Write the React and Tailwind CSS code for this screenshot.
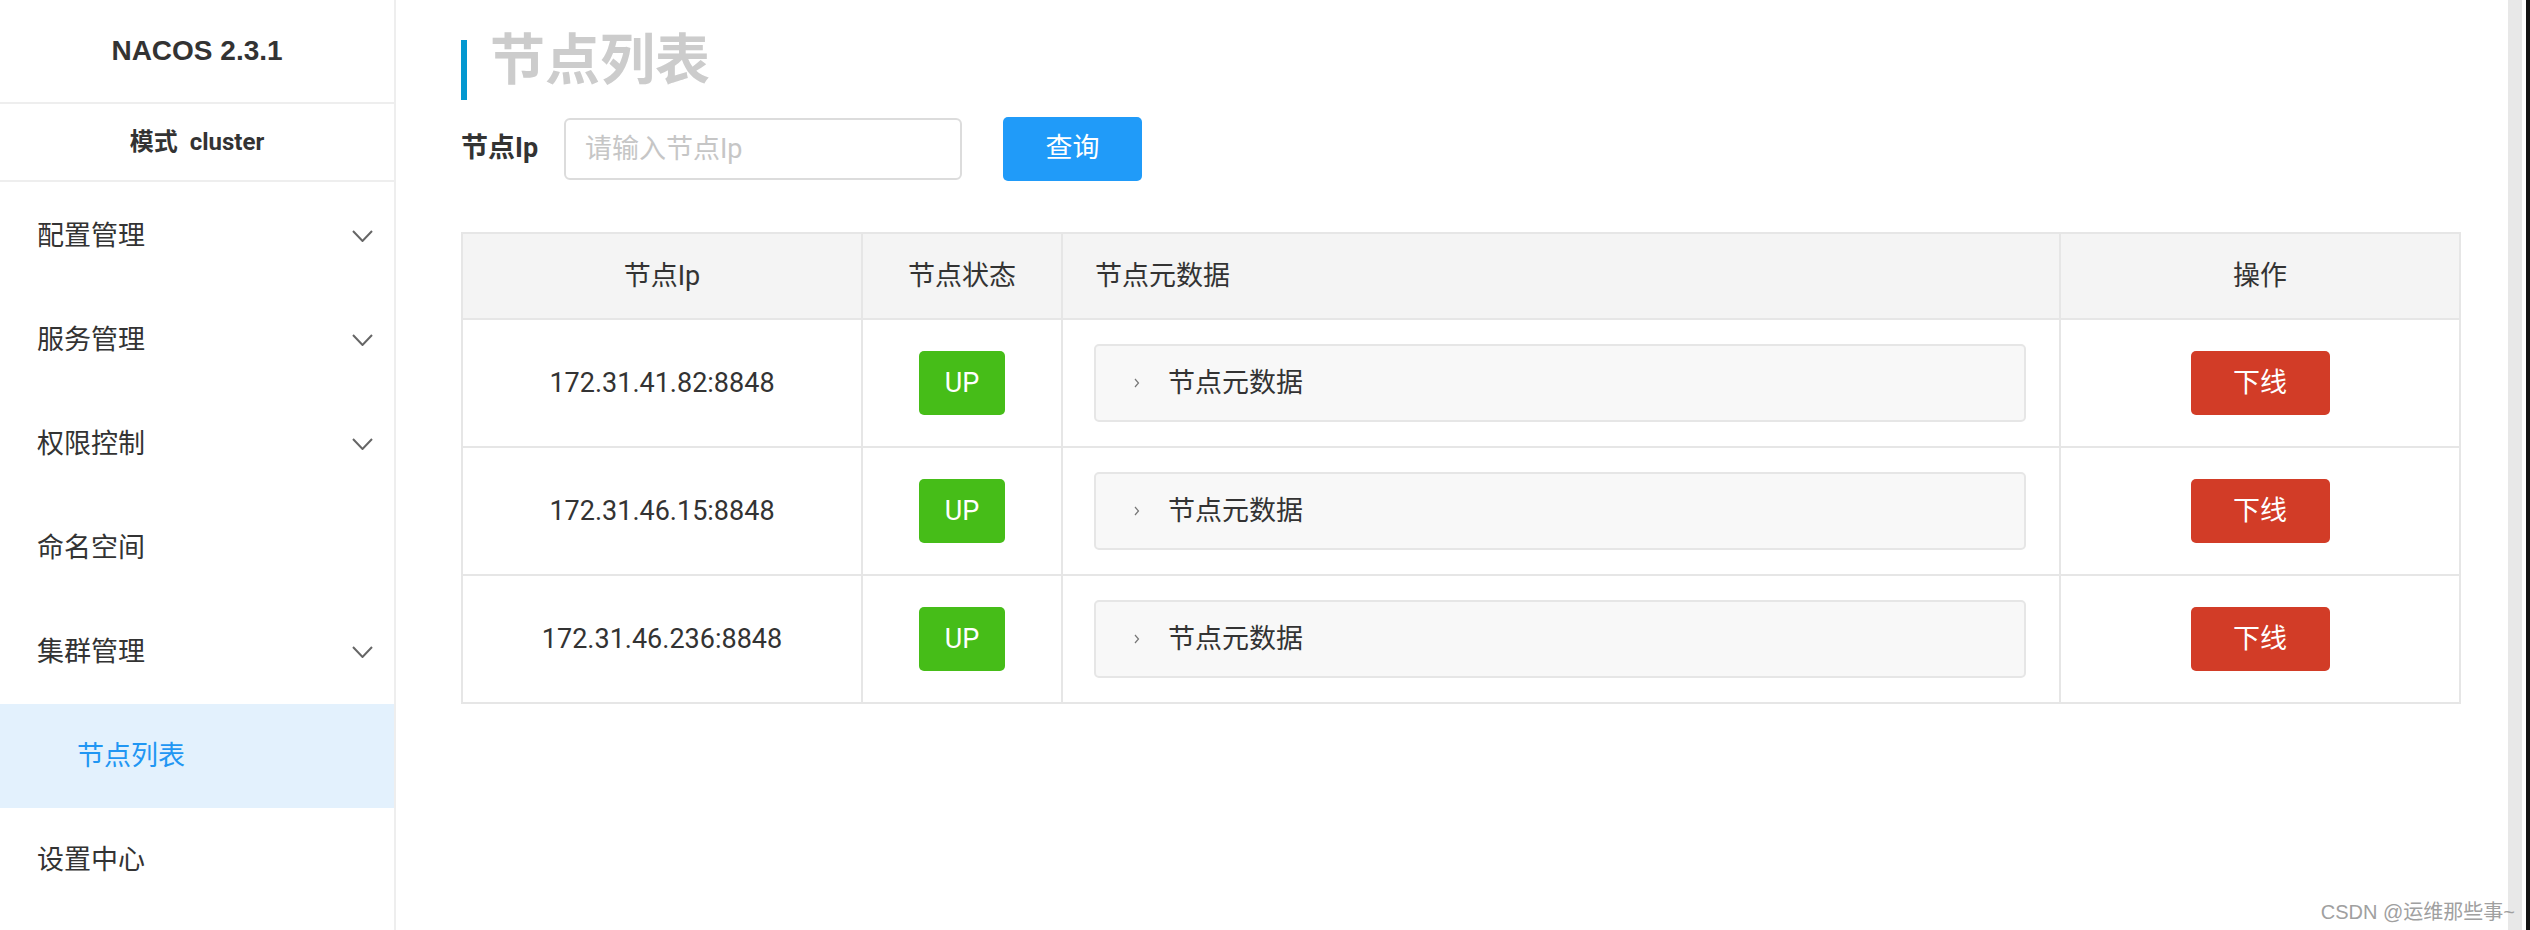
import React from 'react';

const menu = [
    { label: '配置管理', arrow: true },
    { label: '服务管理', arrow: true },
    { label: '权限控制', arrow: true },
    { label: '命名空间', arrow: false },
    { label: '集群管理', arrow: true },
    { label: '节点列表', arrow: false, active: true },
    { label: '设置中心', arrow: false },
];

const nodes = ['172.31.41.82:8848', '172.31.46.15:8848', '172.31.46.236:8848'];

function ChevronDown() {
    return (
        <svg width="21" height="12" viewBox="0 0 21 12" fill="none">
            <path d="M1 1 L10.5 11 L20 1" stroke="#666666" strokeWidth="2" />
        </svg>
    );
}

function Sidebar() {
    return (
        <aside className="w-[396px] shrink-0 h-[930px] border-r-2 border-[#eeeeee] flex flex-col">
            <div className="h-[102px] flex items-center justify-center text-[28px] font-bold text-[#333333] font-['Liberation_Sans',sans-serif]">
                NACOS 2.3.1
            </div>
            <div className="h-[80px] border-y-2 border-[#eeeeee] flex items-center justify-center text-[24px] font-bold text-[#333333]">
                模式&nbsp;&nbsp;cluster
            </div>
            <nav className="pt-[2px]">
                {menu.map((item) => (
                    <div
                        key={item.label}
                        className={`h-[104px] flex items-center justify-between pr-[21px] text-[27px] ${item.active ? 'bg-[#e3f1fd] text-[#2196f3] pl-[77px]' : 'text-[#333333] pl-[37px]'}`}
                    >
                        <span>{item.label}</span>
                        {item.arrow && <ChevronDown />}
                    </div>
                ))}
            </nav>
        </aside>
    );
}

function NodeRow({ ip }) {
    return (
        <tr className="h-[128px]">
            <td className="border-2 border-[#e6e6e6] text-center text-[27px] text-[#333333]">{ip}</td>
            <td className="border-2 border-[#e6e6e6]">
                <div className="mx-auto w-[86px] h-[64px] rounded-[5px] bg-[#46bd18] text-white text-[27px] flex items-center justify-center">
                    UP
                </div>
            </td>
            <td className="border-2 border-[#e6e6e6] pl-[31px] pr-[33px]">
                <div className="h-[78px] rounded-[5px] border-2 border-[#e6e6e6] bg-[#f8f8f8] flex items-center pl-[38px]">
                    <svg width="6" height="10" viewBox="0 0 6 10" fill="none">
                        <path d="M1 1 L4.5 5 L1 9" stroke="#777777" strokeWidth="1.2" />
                    </svg>
                    <span className="ml-[28px] text-[27px] text-[#333333]">节点元数据</span>
                </div>
            </td>
            <td className="border-2 border-[#e6e6e6]">
                <button className="mx-auto w-[139px] h-[64px] rounded-[5px] bg-[#d23c27] text-white text-[27px] flex items-center justify-center">
                    下线
                </button>
            </td>
        </tr>
    );
}

export default function App() {
    return (
        <div className="relative flex w-full h-[930px] overflow-hidden bg-white font-['Roboto','Noto_Sans_CJK_SC',sans-serif]">
            <Sidebar />

            <main className="flex-1 pl-[65px] pr-[47px]">
                <div className="flex pt-[40px]">
                    <div className="w-[6px] h-[60px] bg-[#0398d0]" />
                    <h1 className="ml-[23px] -mt-[7px] text-[55px] leading-[55px] font-bold text-[#cccccc]">节点列表</h1>
                </div>

                <div className="mt-[17px] h-[63px] flex items-center">
                    <label className="w-[103px] text-[27px] font-bold text-[#333333]">节点Ip</label>
                    <input
                        className="w-[398px] h-[62px] rounded-[6px] border-2 border-[#dcdcdc] pl-[19px] text-[27px] outline-none placeholder:text-[#c6c6c6]"
                        placeholder="请输入节点Ip"
                    />
                    <button className="ml-[41px] w-[139px] h-[64px] rounded-[5px] bg-[#209bf9] text-white text-[27px]">查询</button>
                </div>

                <table className="mt-[52px] w-[1998px] table-fixed border-collapse">
                    <colgroup>
                        <col className="w-[400px]" />
                        <col className="w-[200px]" />
                        <col className="w-[998px]" />
                        <col className="w-[400px]" />
                    </colgroup>
                    <thead>
                        <tr className="h-[86px] bg-[#f4f4f4] text-[27px] text-[#333333]">
                            <th className="border-2 border-[#e6e6e6] font-normal text-center">节点Ip</th>
                            <th className="border-2 border-[#e6e6e6] font-normal text-center">节点状态</th>
                            <th className="border-2 border-[#e6e6e6] font-normal text-left pl-[32px]">节点元数据</th>
                            <th className="border-2 border-[#e6e6e6] font-normal text-center">操作</th>
                        </tr>
                    </thead>
                    <tbody>
                        {nodes.map((ip) => (
                            <NodeRow key={ip} ip={ip} />
                        ))}
                    </tbody>
                </table>
            </main>

            {/* scrollbar track + window edge */}
            <div className="w-[14px] shrink-0 bg-[#e8e8e8]" />
            <div className="w-[4px] shrink-0 bg-white" />
            <div className="w-[6px] shrink-0 bg-[#141414]" />

            <div className="absolute right-[15px] bottom-[8px] text-[20px] leading-[20px] text-[#a0a0a0] font-['Liberation_Sans','Noto_Sans_CJK_SC',sans-serif]">
                CSDN @运维那些事~
            </div>
        </div>
    );
}
